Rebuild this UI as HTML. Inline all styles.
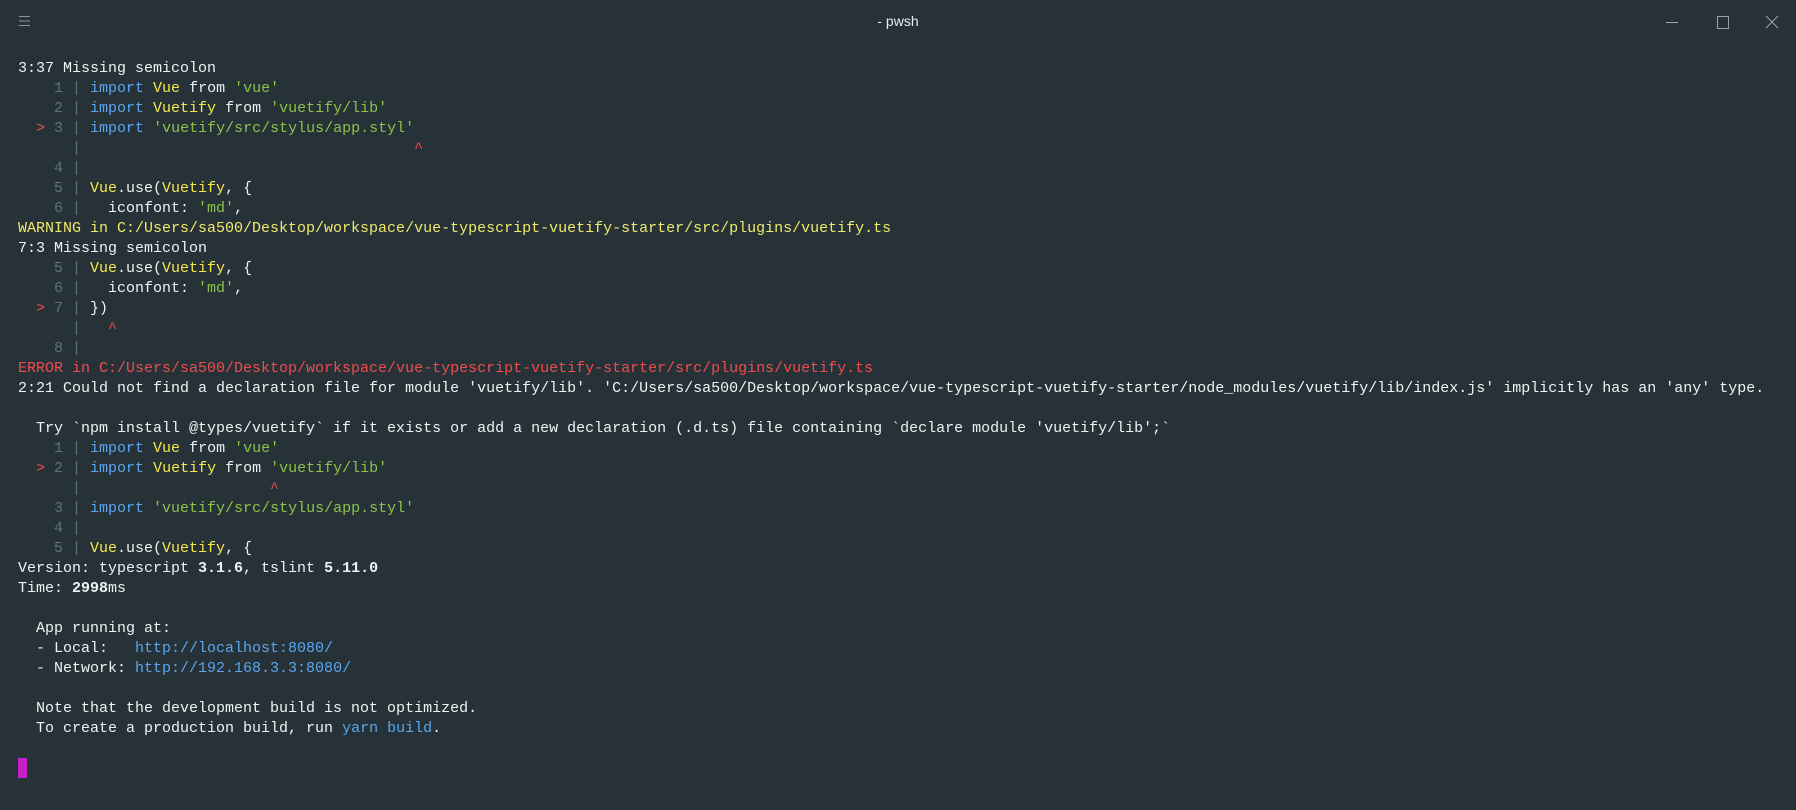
<!DOCTYPE html>
<html><head><meta charset="utf-8"><style>
html,body{margin:0;padding:0;width:1796px;height:810px;background:#263238;overflow:hidden}
body{position:relative;font-family:"Liberation Mono",monospace;font-size:15px;color:#eef2f2}
#t{position:absolute;left:18px;top:59px;white-space:pre;line-height:20px}
.b{color:#5aa6ef}.y{color:#f3e84a}.g{color:#8bc34a}.r{color:#f14c4c}.n{color:#5a7380}.k{font-weight:bold}.w{color:#f0e86a}
.title{position:absolute;top:13px;left:0;width:1796px;text-align:center;font-family:"Liberation Sans",sans-serif;font-size:14px;color:#e8eef0}
</style></head><body>
<svg style="position:absolute;left:19px;top:15px" width="12" height="12"><path d="M0 1.5H11M0 6H11M0 10.5H11" stroke="#8a969c" stroke-width="1"/></svg>
<div class="title">- pwsh</div>
<svg style="position:absolute;left:1660px;top:16px" width="130" height="14"><path d="M6 6.5H18" stroke="#9aa4a8" stroke-width="1"/><path d="M57.5 0.5h11v12h-11z" fill="none" stroke="#9aa4a8"/><path d="M106 0L118 12M118 0L106 12" stroke="#9aa4a8" stroke-width="1"/></svg>
<div id="t">3:37 Missing semicolon
<span class="n">    1 | </span><span class="b">import</span> <span class="y">Vue</span> from <span class="g">'vue'</span>
<span class="n">    2 | </span><span class="b">import</span> <span class="y">Vuetify</span> from <span class="g">'vuetify/lib'</span>
<span class="r">  &gt; </span><span class="n">3 | </span><span class="b">import</span> <span class="g">'vuetify/src/stylus/app.styl'</span>
<span class="n">      | </span>                                    <span class="r">^</span>
<span class="n">    4 | </span>
<span class="n">    5 | </span><span class="y">Vue</span>.use(<span class="y">Vuetify</span>, {
<span class="n">    6 | </span>  iconfont: <span class="g">'md'</span>,
<span class="w">WARNING in C:/Users/sa500/Desktop/workspace/vue-typescript-vuetify-starter/src/plugins/vuetify.ts</span>
7:3 Missing semicolon
<span class="n">    5 | </span><span class="y">Vue</span>.use(<span class="y">Vuetify</span>, {
<span class="n">    6 | </span>  iconfont: <span class="g">'md'</span>,
<span class="r">  &gt; </span><span class="n">7 | </span>})
<span class="n">      | </span>  <span class="r">^</span>
<span class="n">    8 | </span>
<span class="r">ERROR in C:/Users/sa500/Desktop/workspace/vue-typescript-vuetify-starter/src/plugins/vuetify.ts</span>
2:21 Could not find a declaration file for module 'vuetify/lib'. 'C:/Users/sa500/Desktop/workspace/vue-typescript-vuetify-starter/node_modules/vuetify/lib/index.js' implicitly has an 'any' type.

  Try `npm install @types/vuetify` if it exists or add a new declaration (.d.ts) file containing `declare module 'vuetify/lib';`
<span class="n">    1 | </span><span class="b">import</span> <span class="y">Vue</span> from <span class="g">'vue'</span>
<span class="r">  &gt; </span><span class="n">2 | </span><span class="b">import</span> <span class="y">Vuetify</span> from <span class="g">'vuetify/lib'</span>
<span class="n">      | </span>                    <span class="r">^</span>
<span class="n">    3 | </span><span class="b">import</span> <span class="g">'vuetify/src/stylus/app.styl'</span>
<span class="n">    4 | </span>
<span class="n">    5 | </span><span class="y">Vue</span>.use(<span class="y">Vuetify</span>, {
Version: typescript <span class="k">3.1.6</span>, tslint <span class="k">5.11.0</span>
Time: <span class="k">2998</span>ms

  App running at:
  - Local:   <span class="b">http://localhost:8080/</span>
  - Network: <span class="b">http://192.168.3.3:8080/</span>

  Note that the development build is not optimized.
  To create a production build, run <span class="b">yarn build</span>.
</div>
<div style="position:absolute;left:18px;top:758px;width:9px;height:20px;background:#c81ec8"></div>
</body></html>
